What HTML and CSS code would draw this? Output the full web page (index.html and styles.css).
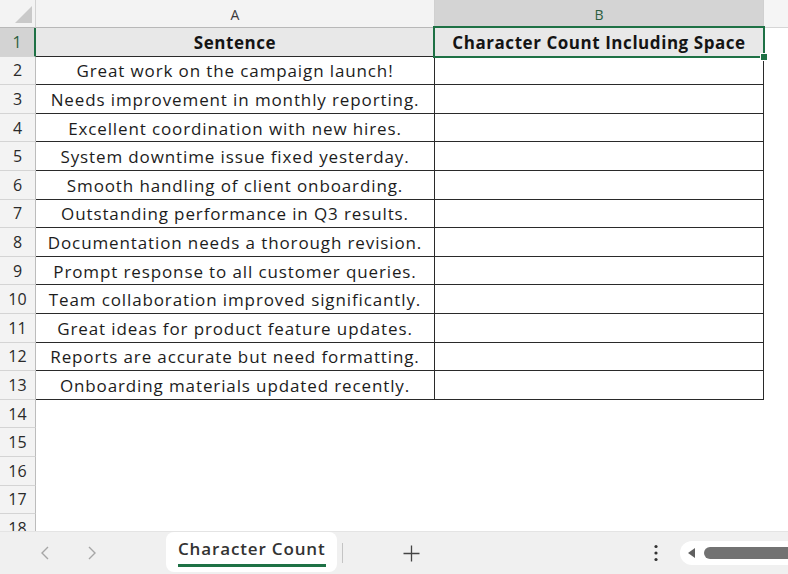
FILE: index.html
```html
<!DOCTYPE html>
<html>
<head>
<meta charset="utf-8">
<link rel="stylesheet" href="styles.css">
</head>
<body>
<div class="app">
  <div class="sheet">
    <div class="corner"><span class="tri"></span></div>
    <div class="ch">A</div>
    <div class="ch ch-sel">B</div>
    <div class="ch ch-rest"></div>

    <div class="rh rh-sel">1</div>
    <div class="c hd">Sentence</div>
    <div class="c hd active">Character Count Including Space<span class="selbox"><span class="handle"></span></span></div>
    <div class="x"></div>

    <div class="rh">2</div><div class="c">Great work on the campaign launch!</div><div class="c"></div><div class="x"></div>
    <div class="rh">3</div><div class="c">Needs improvement in monthly reporting.</div><div class="c"></div><div class="x"></div>
    <div class="rh">4</div><div class="c">Excellent coordination with new hires.</div><div class="c"></div><div class="x"></div>
    <div class="rh">5</div><div class="c">System downtime issue fixed yesterday.</div><div class="c"></div><div class="x"></div>
    <div class="rh">6</div><div class="c">Smooth handling of client onboarding.</div><div class="c"></div><div class="x"></div>
    <div class="rh">7</div><div class="c">Outstanding performance in Q3 results.</div><div class="c"></div><div class="x"></div>
    <div class="rh">8</div><div class="c">Documentation needs a thorough revision.</div><div class="c"></div><div class="x"></div>
    <div class="rh">9</div><div class="c">Prompt response to all customer queries.</div><div class="c"></div><div class="x"></div>
    <div class="rh">10</div><div class="c">Team collaboration improved significantly.</div><div class="c"></div><div class="x"></div>
    <div class="rh">11</div><div class="c">Great ideas for product feature updates.</div><div class="c"></div><div class="x"></div>
    <div class="rh">12</div><div class="c">Reports are accurate but need formatting.</div><div class="c"></div><div class="x"></div>
    <div class="rh">13</div><div class="c">Onboarding materials updated recently.</div><div class="c"></div><div class="x"></div>

    <div class="rh">14</div><div class="x"></div><div class="x"></div><div class="x"></div>
    <div class="rh">15</div><div class="x"></div><div class="x"></div><div class="x"></div>
    <div class="rh">16</div><div class="x"></div><div class="x"></div><div class="x"></div>
    <div class="rh">17</div><div class="x"></div><div class="x"></div><div class="x"></div>
    <div class="rh">18</div><div class="x"></div><div class="x"></div><div class="x"></div>
  </div>

  <div class="tabbar">
    <div class="nav">
      <svg class="arrow" width="10" height="14" viewBox="0 0 10 14"><path d="M8 1 L2 7 L8 13" fill="none" stroke="#a6a6a6" stroke-width="1.4"/></svg>
      <svg class="arrow" width="10" height="14" viewBox="0 0 10 14"><path d="M2 1 L8 7 L2 13" fill="none" stroke="#a6a6a6" stroke-width="1.4"/></svg>
    </div>
    <div class="tab"><span class="tab-label">Character Count</span></div>
    <div class="sep"></div>
    <svg class="plus" width="17" height="17" viewBox="0 0 17 17"><path d="M8.5 0.5 V16.5 M0.5 8.5 H16.5" stroke="#444" stroke-width="1.3"/></svg>
    <div class="right">
      <svg class="dots" width="4" height="18" viewBox="0 0 4 18"><circle cx="2" cy="2.5" r="1.6" fill="#333"/><circle cx="2" cy="9" r="1.6" fill="#333"/><circle cx="2" cy="15.5" r="1.6" fill="#333"/></svg>
      <div class="scroll">
        <svg class="tri-left" width="7" height="10" viewBox="0 0 7 10"><path d="M7 0 L0 5 L7 10 Z" fill="#606060"/></svg>
        <div class="thumb"></div>
      </div>
    </div>
  </div>
</div>
</body>
</html>
```

FILE: styles.css
```css
html, body {
  margin: 0;
  padding: 0;
  background: #ffffff;
}

.app {
  width: 788px;
  height: 574px;
  overflow: hidden;
  display: flex;
  flex-direction: column;
  font-family: "Open Sans", "Noto Sans", sans-serif;
  color: #1c1c1c;
}

.sheet {
  flex: 1;
  overflow: hidden;
  display: grid;
  grid-template-columns: 36px 399px 329px 1fr;
  grid-template-rows: 28px repeat(18, 28.6px);
  background: #ffffff;
}

.sheet > div {
  box-sizing: border-box;
}

.corner {
  background: #f3f3f3;
  border-right: 1px solid #d2d2d2;
  border-bottom: 1px solid #b8b8b8;
  position: relative;
}

.tri {
  position: absolute;
  right: 3px;
  bottom: 4px;
  width: 0;
  height: 0;
  border-left: 17px solid transparent;
  border-bottom: 17px solid #c9c9c9;
}

.ch {
  background: #f3f3f3;
  border-right: 1px solid #d0d0d0;
  border-bottom: 1px solid #b8b8b8;
  display: flex;
  align-items: center;
  justify-content: center;
  font-size: 14px;
  color: #3a3a3a;
  padding-top: 1px;
}

.ch-sel {
  background: #d4d4d4;
  color: #2c5e3f;
}

.ch-rest {
  background: #f5f5f5;
  border-right: none;
  border-bottom: 1px solid #d6d6d6;
}

.rh {
  background: #f3f3f3;
  border-right: 1px solid #bcbcbc;
  border-bottom: 1px solid #d4d4d4;
  display: flex;
  align-items: center;
  justify-content: center;
  font-size: 16px;
  color: #2a2a2a;
}

.rh-sel {
  background: #d3d3d3;
  border-right: 2px solid #1e7145;
  color: #2c5e3f;
}

.c {
  border-right: 1px solid #2a2a2a;
  border-bottom: 1px solid #2a2a2a;
  display: flex;
  align-items: center;
  justify-content: center;
  font-size: 17px;
  letter-spacing: 0.88px;
  white-space: nowrap;
  padding-top: 1px;
}

.hd {
  background: #e8e8e8;
  font-weight: 700;
  color: #141414;
  letter-spacing: 0.55px;
}

.active {
  position: relative;
}

.selbox {
  position: absolute;
  top: -2px;
  left: -2px;
  right: -2px;
  bottom: -2px;
  border: 2px solid #1e7145;
}

.handle {
  position: absolute;
  right: -5px;
  bottom: -5px;
  width: 6px;
  height: 6px;
  background: #1e7145;
  border: 1px solid #ffffff;
}

.x {
  background: #ffffff;
}

.tabbar {
  height: 43px;
  flex: none;
  background: #f0f0f0;
  border-top: 1px solid #e4e4e4;
  box-sizing: border-box;
  display: flex;
  align-items: center;
}

.nav {
  width: 166px;
  flex: none;
  box-sizing: border-box;
  padding-left: 40px;
  display: flex;
  align-items: center;
  gap: 37px;
}

.tab {
  width: 171px;
  height: 40px;
  align-self: flex-end;
  margin-bottom: 2px;
  flex: none;
  background: #ffffff;
  border-radius: 8px;
  box-sizing: border-box;
  padding: 5px 12px 0;
  display: flex;
  align-items: flex-start;
}

.tab-label {
  font-size: 17px;
  font-weight: 600;
  letter-spacing: 0.85px;
  color: #333333;
  border-bottom: 3px solid #1e7145;
  line-height: 24px;
  padding-bottom: 3px;
  white-space: nowrap;
}

.sep {
  width: 1px;
  height: 20px;
  background: #c4c4c4;
  margin-left: 5px;
  flex: none;
}

.plus {
  margin-left: 60px;
  flex: none;
}

.right {
  margin-left: auto;
  display: flex;
  align-items: center;
}

.dots {
  margin-right: 22px;
}

.scroll {
  width: 108px;
  height: 24px;
  background: #ffffff;
  border-radius: 12px 0 0 12px;
  display: flex;
  align-items: center;
  padding-left: 8px;
  box-sizing: border-box;
}

.tri-left {
  flex: none;
}

.thumb {
  margin-left: 9px;
  flex: 1;
  height: 12px;
  background: #727272;
  border-radius: 6px 0 0 6px;
}
```
